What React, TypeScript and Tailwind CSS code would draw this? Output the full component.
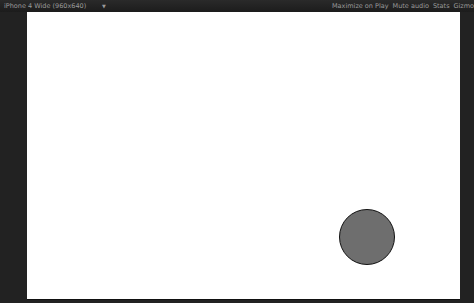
import React from "react";

export default function App() {
  return (
    <div className="w-[474px] h-[303px] bg-[#222222] flex flex-col overflow-hidden" style={{ fontFamily: '"DejaVu Sans",sans-serif' }}>
      <div className="h-[12px] bg-gradient-to-b from-[#2a2a2a] to-[#1c1c1c] flex items-center text-[6.5px] text-[#9a9a9a] leading-none shrink-0 whitespace-nowrap overflow-hidden">
        <div className="pl-[4px] w-[102px] shrink-0">iPhone 4 Wide (960x640)</div>
        <div className="text-[5px] w-[4px] shrink-0">▼</div>
        <div className="ml-[226px] flex gap-[4px] shrink-0">
          <span>Maximize on Play</span>
          <span>Mute audio</span>
          <span>Stats</span>
          <span>Gizmos</span>
        </div>
      </div>
      <div className="flex-1 flex pl-[27px] pr-[14px] pb-[3px]">
        <div className="flex-1 bg-white relative border-b border-[#111]">
          <div className="absolute left-[312px] top-[197px] w-[56px] h-[56px] rounded-full bg-[#6e6e6e] border-[1.5px] border-[#111]" />
        </div>
      </div>
    </div>
  );
}
